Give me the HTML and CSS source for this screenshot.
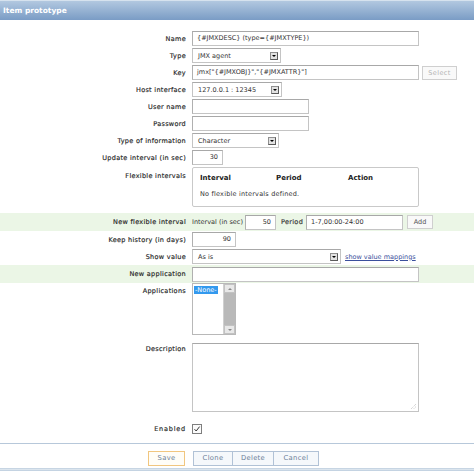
FILE: index.html
```html
<!DOCTYPE html>
<html>
<head>
<meta charset="utf-8">
<link rel="stylesheet" href="styles.css">
</head>
<body>
<div class="page">
  <div class="header"><span class="title">Item prototype</span></div>
  <div class="form">
    <div class="row"><div class="label">Name</div><div class="field"><div class="input w-226">{#JMXDESC} (type={#JMXTYPE})</div></div></div>
    <div class="row"><div class="label">Type</div><div class="field"><div class="select w-89"><span class="sel-text">JMX agent</span><span class="arrow"></span></div></div></div>
    <div class="row"><div class="label">Key</div><div class="field"><div class="input w-226">jmx["{#JMXOBJ}","{#JMXATTR}"]</div><div class="btn-select">Select</div></div></div>
    <div class="row"><div class="label">Host interface</div><div class="field"><div class="select w-90"><span class="sel-text">127.0.0.1 : 12345</span><span class="arrow"></span></div></div></div>
    <div class="row"><div class="label">User name</div><div class="field"><div class="input w-116"></div></div></div>
    <div class="row"><div class="label">Password</div><div class="field"><div class="input w-116"></div></div></div>
    <div class="row"><div class="label">Type of information</div><div class="field"><div class="select w-87"><span class="sel-text">Character</span><span class="arrow"></span></div></div></div>
    <div class="row"><div class="label">Update interval (in sec)</div><div class="field"><div class="input num w-31">30</div></div></div>
    <div class="row row-top flex-row"><div class="label">Flexible intervals</div><div class="field">
      <div class="flexbox">
        <div class="flex-head"><span class="c1">Interval</span><span class="c2">Period</span><span class="c3">Action</span></div>
        <div class="flex-empty">No flexible intervals defined.</div>
      </div>
    </div></div>
    <div class="row green"><div class="label">New flexible interval</div><div class="field">
      <span class="inline-text">Interval (in sec)</span><div class="input num w-31">50</div>
      <span class="inline-text period">Period</span><div class="input w-97">1-7,00:00-24:00</div>
      <div class="btn-add">Add</div>
    </div></div>
    <div class="row"><div class="label">Keep history (in days)</div><div class="field"><div class="input num w-44">90</div></div></div>
    <div class="row"><div class="label">Show value</div><div class="field"><div class="select w-149"><span class="sel-text">As is</span><span class="arrow"></span></div><a class="link" href="#">show value mappings</a></div></div>
    <div class="row green green2"><div class="label">New application</div><div class="field"><div class="input w-226"></div></div></div>
    <div class="row row-top apps-row"><div class="label">Applications</div><div class="field">
      <div class="listbox">
        <div class="list-items"><span class="opt-sel">-None-</span></div>
        <div class="scrollbar"><span class="sb-btn sb-up"></span><span class="sb-track"></span><span class="sb-btn sb-down"></span></div>
      </div>
    </div></div>
    <div class="row row-top desc-row"><div class="label">Description</div><div class="field">
      <div class="textarea"><svg class="grip" width="7" height="7" viewBox="0 0 7 7"><path d="M6 1L1 6M6 3.5L3.5 6M6 6L6 6" stroke="#b5b5b5" stroke-width="0.8" stroke-dasharray="1 1"/></svg></div>
    </div></div>
    <div class="row enabled-row"><div class="label">Enabled</div><div class="field"><span class="checkbox"><svg width="8" height="8" viewBox="0 0 8 8"><path d="M1.5 4.2L3.2 6L6.6 1.6" fill="none" stroke="#333" stroke-width="1"/></svg></span></div></div>
  </div>
  <div class="footer">
    <div class="buttons">
      <span class="btn btn-save">Save</span>
      <span class="btn-group"><span class="btn">Clone</span><span class="btn">Delete</span><span class="btn">Cancel</span></span>
    </div>
  </div>
</div>
</body>
</html>
```

FILE: styles.css
```css
html, body {
  margin: 0;
  padding: 0;
  background: #ffffff;
}
body {
  font-family: "DejaVu Sans", Verdana, sans-serif;
  font-size: 6.5px;
  color: #333;
}
.page {
  width: 474px;
  height: 472px;
  position: relative;
  overflow: hidden;
}
.header {
  height: 19px;
  border-top: 1px solid #d6e2ee;
  background: linear-gradient(#b2c8e0, #7a9cc5);
  display: flex;
  align-items: center;
  padding-left: 3px;
}
.title {
  color: #ffffff;
  font-weight: bold;
  font-size: 7.5px;
}
.form {
  padding-top: 10px;
}
.row {
  display: flex;
  align-items: center;
  min-height: 17px;
}
.row-top {
  align-items: flex-start;
}
.label {
  width: 186px;
  flex: none;
  text-align: right;
  color: #1e1e1e;
  letter-spacing: 0.3px;
  -webkit-text-stroke: 0.15px #1e1e1e;
}
.field {
  display: flex;
  align-items: center;
  margin-left: 6px;
}
.input {
  box-sizing: border-box;
  height: 15px;
  border: 1px solid #c4c4c4;
  border-top-color: #a8a8a8;
  border-left-color: #b0b0b0;
  background: #fff;
  padding: 0 4px;
  line-height: 13px;
  white-space: nowrap;
  overflow: hidden;
  color: #333;
}
.num { text-align: right; }
.w-226 { width: 227px; }
.w-116 { width: 117px; }
.w-31 { width: 31px; }
.w-44 { width: 44px; }
.w-97 { width: 97px; }
.w-89 { width: 89px; }
.w-90 { width: 90px; }
.w-87 { width: 87px; }
.w-149 { width: 149px; }
.select {
  box-sizing: border-box;
  height: 15px;
  border: 1px solid #c4c4c4;
  border-top-color: #a8a8a8;
  background: #fff;
  display: flex;
  align-items: center;
  justify-content: space-between;
  padding: 0 2px 0 5px;
}
.sel-text { white-space: nowrap; }
.arrow {
  box-sizing: border-box;
  width: 8px;
  height: 8px;
  border: 1px solid #8f8f8f;
  border-right-color: #5a5a5a;
  border-bottom-color: #5a5a5a;
  background: #e2e2e2;
  position: relative;
}
.arrow::after {
  content: "";
  position: absolute;
  left: 1px;
  top: 2px;
  border-left: 2px solid transparent;
  border-right: 2px solid transparent;
  border-top: 2px solid #000;
}
.btn-select {
  box-sizing: border-box;
  margin-left: 3px;
  width: 35px;
  height: 14px;
  border: 1px solid #cfcfcf;
  background: #f9f9f9;
  color: #b3b3b3;
  text-align: center;
  line-height: 12px;
  letter-spacing: 0.4px;
}
.flex-row {
  padding-top: 1px;
  padding-bottom: 6px;
}
.flex-row .label {
  padding-top: 5px;
}
.flexbox {
  box-sizing: border-box;
  width: 227px;
  height: 40px;
  border: 1px solid #c9c9c9;
  border-radius: 2px;
  padding: 6px 0 0 7px;
}
.flex-head {
  display: flex;
  font-weight: bold;
  font-size: 7px;
  color: #222;
}
.c1 { width: 76px; }
.c2 { width: 72px; }
.flex-empty {
  margin-top: 8px;
  color: #333;
  letter-spacing: 0.2px;
}
.green {
  background: #ebf6e6;
  min-height: 18px;
}
.inline-text {
  color: #333;
  margin-right: 2px;
}
.period {
  margin-left: 5px;
  margin-right: 3px;
  letter-spacing: 0.3px;
  -webkit-text-stroke: 0.15px #333;
}
.btn-add {
  box-sizing: border-box;
  margin-left: 4px;
  width: 26px;
  height: 14px;
  border: 1px solid #cfcfcf;
  background: #f9f9f9;
  color: #555;
  text-align: center;
  line-height: 12px;
}
.link {
  margin-left: 4px;
  color: #3b4f9c;
  text-decoration: underline;
}
.apps-row {
  padding-bottom: 8px;
}
.apps-row .label {
  padding-top: 4px;
}
.listbox {
  box-sizing: border-box;
  width: 44px;
  height: 52px;
  border: 1px solid #b8b8b8;
  background: #fff;
  display: flex;
}
.list-items {
  flex: 1;
  padding: 2px 0 0 1px;
}
.opt-sel {
  display: inline-block;
  background: #3399ee;
  color: #fff;
  padding: 0 1px;
  line-height: 8px;
}
.scrollbar {
  width: 11px;
  display: flex;
  flex-direction: column;
  background: #bcbcbc;
  border-left: 1px solid #d0d0d0;
}
.sb-btn {
  box-sizing: border-box;
  height: 9px;
  background: #e8e8e8;
  border: 1px solid #c2c2c2;
  position: relative;
}
.sb-btn::after {
  content: "";
  position: absolute;
  left: 3px;
  top: 3px;
  border-left: 2px solid transparent;
  border-right: 2px solid transparent;
}
.sb-up::after { border-bottom: 2px solid #888; }
.sb-down::after { border-top: 2px solid #888; }
.sb-track { flex: 1; background: #b9b9b9; }
.desc-row {
  padding-bottom: 8px;
}
.desc-row .label {
  padding-top: 2px;
}
.textarea {
  box-sizing: border-box;
  width: 227px;
  height: 69px;
  border: 1px solid #c4c4c4;
  border-top-color: #a8a8a8;
  background: #fff;
  position: relative;
}
.grip {
  position: absolute;
  right: 1px;
  bottom: 1px;
}
.enabled-row .label {
  letter-spacing: 0.8px;
}
.checkbox {
  box-sizing: border-box;
  display: inline-flex;
  align-items: center;
  justify-content: center;
  width: 10px;
  height: 10px;
  border: 1px solid #7e7e7e;
  background: #fbfbfb;
}
.footer {
  margin-top: 6px;
  border-top: 1px solid #b7c8da;
  box-shadow: 0 1px 0 #dbe5ee, 0 2px 0 #c4d3e2;
  padding-top: 7px;
  height: 26px;
  box-sizing: border-box;
  border-bottom: 1px solid #c7d5e3;
  position: relative;
}
.buttons {
  display: flex;
  padding-left: 148px;
}
.btn {
  box-sizing: border-box;
  height: 15px;
  line-height: 13px;
  padding: 0;
  text-align: center;
  border: 1px solid #b1c2d6;
  background: #f5f8fb;
  color: #6d8199;
  font-size: 6.8px;
  letter-spacing: 0.3px;
  display: inline-block;
}
.btn-save {
  width: 37px;
  border-color: #f1c67f;
  background: #fffdf7;
  margin-right: 8px;
}
.btn-group { display: flex; }
.btn-group .btn:nth-child(1) { width: 40px; }
.btn-group .btn:nth-child(2) { width: 41px; border-left: none; }
.btn-group .btn:nth-child(3) { width: 45px; border-left: none; }
```
